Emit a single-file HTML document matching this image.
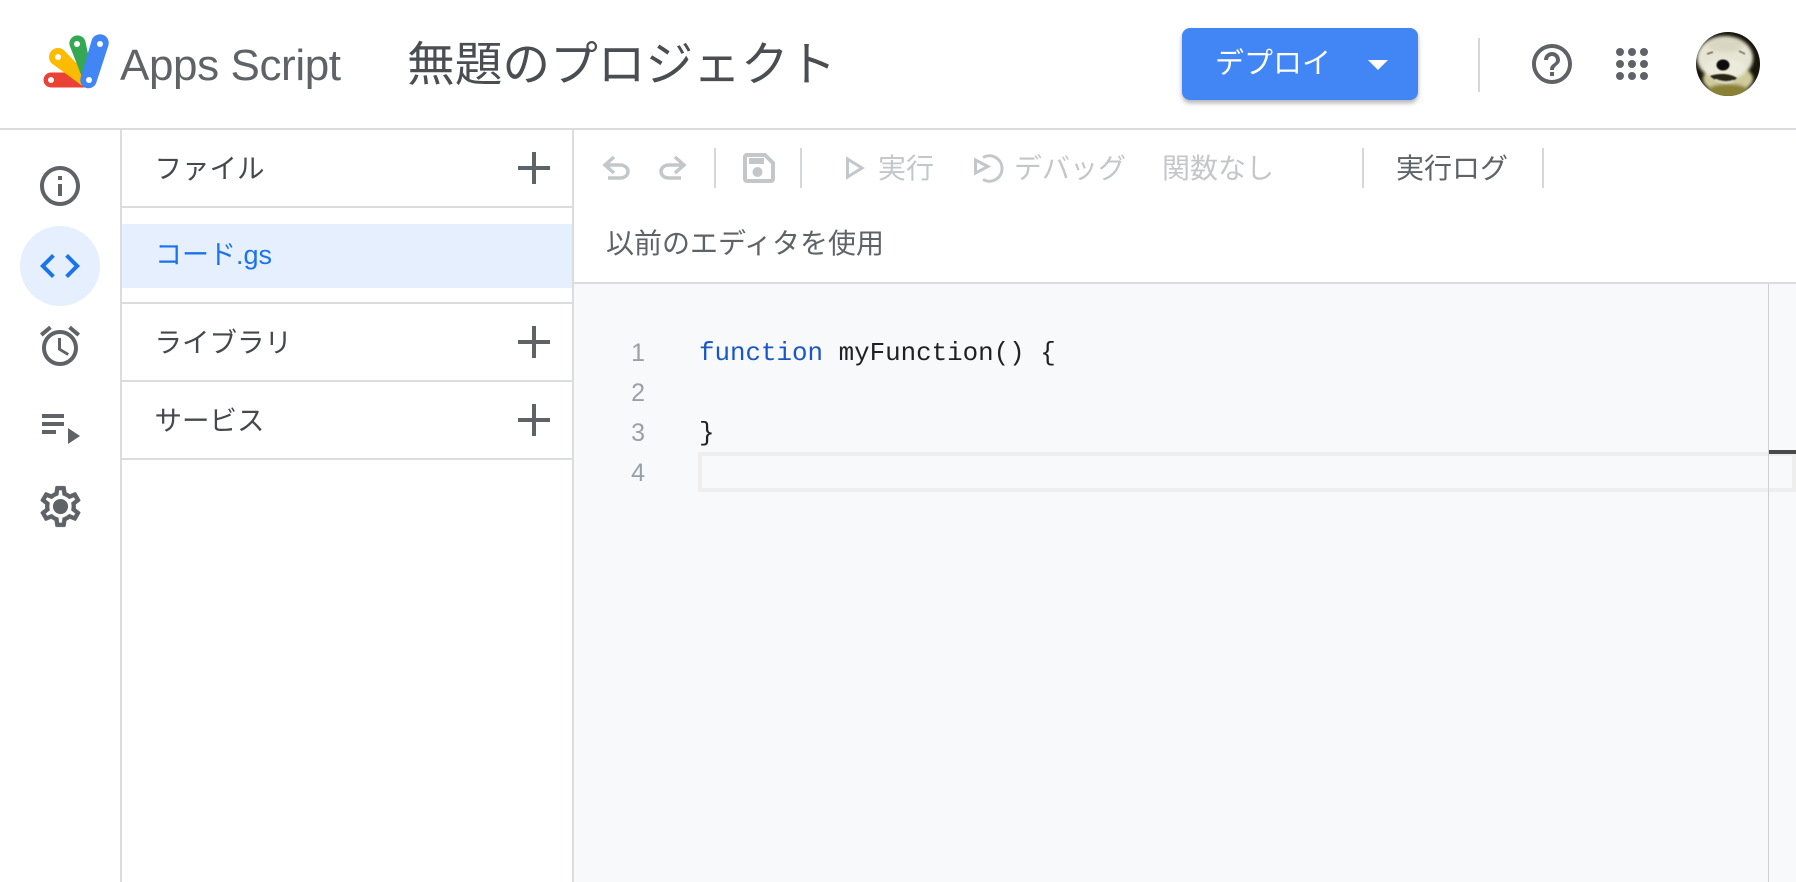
<!DOCTYPE html>
<html lang="ja"><head><meta charset="utf-8"><title>Apps Script</title>
<style>
html,body{margin:0;padding:0;width:1796px;height:882px;overflow:hidden;background:#fff}
body{position:relative;font-family:"Liberation Sans","Noto Sans CJK JP",sans-serif}
.a{position:absolute}
.t{position:absolute;white-space:nowrap;font-family:"Liberation Sans","Noto Sans CJK JP",sans-serif;font-size:28px;line-height:40px;color:#45494d;font-weight:400}
.l{position:absolute;background:#dadce0}
.d{position:absolute;background:#d5d7da;width:2px;top:148px;height:40px}
.g{color:#c4c7ca}
.p{position:absolute;background:#5f6368}
.code{position:absolute;white-space:pre;font-family:"Liberation Mono",monospace;font-size:25.85px;line-height:40px;color:#202124}
.num{position:absolute;left:619px;width:26px;text-align:right;font-family:"Liberation Sans",sans-serif;font-size:25px;line-height:40px;color:#9aa0a6}
svg{position:absolute;overflow:visible}
</style></head><body>

<!-- logo -->
<svg style="left:0;top:0" width="130" height="100" viewBox="0 0 130 100">
<defs><filter id="lb"><feGaussianBlur stdDeviation=".35"/></filter></defs>
<g filter="url(#lb)" stroke-width="1">
<path d="M51 73H72L89 87H51a7 7 0 0 1 0-14z" fill="#ea4335" stroke="#ea4335"/>
<path d="M52 51a8.500 8.500 0 0 1 12 0L89 77 86 87 82 85 52 63a8.500 8.500 0 0 1 0-12z" fill="#fbbc04" stroke="#fbbc04"/>
<path d="M70 45a7.500 7.500 0 0 1 15-3L92 75 89 87 84 81z" fill="#34a853" stroke="#34a853"/>
<path d="M92 41a8 8 0 0 1 16 4L96 82a7.500 7.500 0 0 1-15-4z" fill="#4285f4" stroke="#4285f4"/>
</g>
<circle cx="51" cy="80" r="3" fill="#fff"/><circle cx="58" cy="57" r="3" fill="#fff"/>
<circle cx="77" cy="44" r="3" fill="#fff"/><circle cx="100" cy="44" r="3" fill="#fff"/><circle cx="89" cy="80" r="3" fill="#fff"/>
</svg>
<div class="a" style="left:120px;top:40px;font-size:44px;line-height:52px;color:#5f6368;letter-spacing:-.4px;white-space:nowrap">Apps Script</div>
<div class="t" style="left:407px;top:36px;font-size:47.700px;line-height:60px;color:#4a4e52">無題のプロジェクト</div>

<!-- deploy -->
<div class="a" style="left:1182px;top:28px;width:236px;height:72px;border-radius:8px;background:#4285f4;box-shadow:0 3px 5px rgba(60,64,67,.4)"></div>
<div class="t" style="left:1215px;top:44px;font-size:29px;color:#fff">デプロイ</div>
<svg style="left:1368px;top:60px" width="20" height="10"><path d="M0 0H20L10 10z" fill="#fff"/></svg>
<div class="d" style="left:1478px;top:38px;height:54px"></div>

<svg style="left:1528px;top:40px" width="48" height="48" viewBox="0 0 24 24"><path fill="#5f6368" d="M11 18h2v-2h-2v2zm1-16C6.48 2 2 6.48 2 12s4.48 10 10 10 10-4.48 10-10S17.52 2 12 2zm0 18c-4.41 0-8-3.59-8-8s3.59-8 8-8 8 3.59 8 8-3.590 8-8 8zm0-14c-2.21 0-4 1.79-4 4h2c0-1.1.9-2 2-2s2 .9 2 2c0 2-3 1.75-3 5h2c0-2.25 3-2.5 3-5 0-2.21-1.79-4-4-4z"/></svg>
<svg style="left:1616px;top:48px" width="32" height="32" fill="#5f6368">
<circle cx="4" cy="4" r="4"/><circle cx="16" cy="4" r="4"/><circle cx="28" cy="4" r="4"/>
<circle cx="4" cy="16" r="4"/><circle cx="16" cy="16" r="4"/><circle cx="28" cy="16" r="4"/>
<circle cx="4" cy="28" r="4"/><circle cx="16" cy="28" r="4"/><circle cx="28" cy="28" r="4"/></svg>

<!-- avatar -->
<svg style="left:1696px;top:32px" width="64" height="64" viewBox="0 0 64 64">
<defs><clipPath id="c"><circle cx="32" cy="32" r="32"/></clipPath><filter id="b"><feGaussianBlur stdDeviation="1.500"/></filter><filter id="b2"><feGaussianBlur stdDeviation=".6"/></filter></defs>
<g clip-path="url(#c)"><rect width="64" height="64" fill="#17140a"/>
<g filter="url(#b)">
<ellipse cx="29" cy="26" rx="28" ry="22" fill="#e6e4d2"/>
<ellipse cx="32" cy="47" rx="25" ry="14" fill="#cfcb9c"/>
<ellipse cx="32" cy="59" rx="21" ry="7" fill="#8a8136"/>
<ellipse cx="29" cy="37" rx="21" ry="10" fill="#eceadb"/>
<ellipse cx="30" cy="13" rx="18" ry="7" fill="#d9d7c2"/>
</g>
<g filter="url(#b2)">
<ellipse cx="27" cy="33" rx="6.500" ry="5.500" fill="#111"/>
<path d="M14 44C22 41 34 41 41 46 35 52 22 52 14 44z" fill="#2b2514"/>
<path d="M19 48C26 51 33 51 38 49" stroke="#d8d6c0" stroke-width="2.500" fill="none"/>
<path d="M11 22l6-2M43 19l6 3" stroke="#6b6753" stroke-width="1.500"/>
</g></g></svg>

<div class="l" style="left:0;top:128px;width:1796px;height:2px"></div>

<!-- left rail -->
<div class="l" style="left:120px;top:130px;width:2px;height:752px"></div>
<svg style="left:36px;top:162px" width="48" height="48" viewBox="0 0 24 24"><path fill="#5f6368" d="M11 7h2v2h-2zm0 4h2v6h-2zm1-9C6.48 2 2 6.48 2 12s4.48 10 10 10 10-4.48 10-10S17.520 2 12 2zm0 18c-4.41 0-8-3.59-8-8s3.59-8 8-8 8 3.59 8 8-3.59 8-8 8z"/></svg>
<div class="a" style="left:20px;top:226px;width:80px;height:80px;border-radius:50%;background:#e5effd"></div>
<svg style="left:36px;top:242px" width="48" height="48" viewBox="0 0 24 24"><path fill="#1a73e8" d="M9.4 16.6L4.8 12l4.6-4.6L8 6l-6 6 6 6 1.4-1.4zm5.2 0l4.6-4.6-4.6-4.6L16 6l6 6-6 6-1.4-1.4z"/></svg>
<svg style="left:36px;top:322.300px" width="48" height="48" viewBox="0 0 24 24"><path fill="#5f6368" d="M22 5.72l-4.6-3.86-1.29 1.53 4.6 3.86L22 5.72zM7.88 3.39L6.6 1.86 2 5.71l1.29 1.53 4.59-3.85zM12.5 8H11v6l4.75 2.85.75-1.23-4-2.37V8zM12 4c-4.97 0-9 4.03-9 9s4.02 9 9 9c4.97 0 9-4.03 9-9s-4.03-9-9-9zm0 16c-3.87 0-7-3.13-7-7s3.13-7 7-7 7 3.13 7 7-3.13 7-7 7z"/></svg>
<svg style="left:0;top:400px" width="100" height="50" fill="#5f6368">
<rect x="42" y="14" width="22" height="4"/><rect x="42" y="22" width="22" height="4"/><rect x="42" y="30" width="14" height="4"/>
<path d="M68 28L80 36 68 44z"/></svg>
<svg style="left:35.500px;top:481.500px" width="49" height="49" viewBox="0 0 24 24"><path fill="#5f6368" stroke="#5f6368" stroke-width=".15" stroke-linejoin="round" d="M19.43 12.98c.04-.32.07-.64.07-.98 0-.34-.03-.66-.07-.98l2.11-1.65c.19-.15.24-.42.12-.64l-2-3.46c-.09-.16-.26-.25-.44-.25-.06 0-.12.01-.17.03l-2.49 1c-.52-.4-1.08-.73-1.69-.98l-.38-2.65C14.46 2.18 14.25 2 14 2h-4c-.25 0-.46.18-.49.42l-.38 2.65c-.61.25-1.17.59-1.69.98l-2.49-1c-.06-.02-.12-.03-.18-.03-.17 0-.34.09-.43.25l-2 3.46c-.13.22-.07.49.12.64l2.11 1.65c-.04.32-.07.65-.07.98 0 .33.03.66.07.98l-2.11 1.65c-.19.15-.24.42-.12.64l2 3.46c.09.16.26.25.44.25.06 0 .12-.01.17-.03l2.49-1c.52.4 1.08.73 1.69.98l.38 2.65c.03.24.24.42.49.42h4c.25 0 .46-.18.49-.42l.38-2.65c.61-.25 1.17-.59 1.69-.98l2.49 1c.06.02.12.03.18.03.17 0 .34-.09.43-.25l2-3.46c.12-.22.07-.49-.12-.64l-2.11-1.65zm-1.98-1.71c.04.31.05.52.05.73 0 .21-.02.43-.05.73l-.14 1.13.89.7 1.08.84-.7 1.21-1.27-.51-1.04-.42-.9.68c-.43.32-.84.56-1.25.73l-1.06.43-.16 1.13-.2 1.35h-1.4l-.19-1.35-.16-1.13-1.06-.43c-.43-.18-.83-.41-1.23-.71l-.91-.7-1.06.43-1.27.51-.7-1.21 1.08-.84.89-.7-.14-1.13c-.03-.31-.05-.54-.05-.74s.02-.43.05-.73l.14-1.13-.89-.7-1.08-.84.7-1.21 1.27.51 1.04.42.9-.68c.43-.32.84-.56 1.25-.73l1.06-.43.16-1.13.2-1.35h1.39l.19 1.35.16 1.13 1.06.43c.43.18.83.41 1.23.71l.91.7 1.06-.43 1.27-.51.7 1.21-1.07.85-.89.7.14 1.13z"/><circle cx="12" cy="12" r="3.700" fill="#5f6368"/></svg>

<!-- sidebar -->
<div class="l" style="left:572px;top:130px;width:2px;height:752px"></div>
<div class="t" style="left:154.500px;top:149px;font-size:27.500px">ファイル</div>
<div class="p" style="left:518px;top:166.250px;width:32px;height:3.500px"></div><div class="p" style="left:532.250px;top:152px;width:3.500px;height:32px"></div>
<div class="l" style="left:122px;top:206px;width:450px;height:2px"></div>
<div class="a" style="left:122px;top:224px;width:450px;height:64px;background:#e5effd"></div>
<div class="t" style="left:155px;top:235px;font-size:27px;color:#1a73e8">コード.gs</div>
<div class="l" style="left:122px;top:302px;width:450px;height:2px"></div>
<div class="t" style="left:154.500px;top:323px;font-size:27.500px">ライブラリ</div>
<div class="p" style="left:518px;top:340.250px;width:32px;height:3.500px"></div><div class="p" style="left:532.250px;top:326px;width:3.500px;height:32px"></div>
<div class="l" style="left:122px;top:380px;width:450px;height:2px"></div>
<div class="t" style="left:154.500px;top:401px;font-size:27.500px">サービス</div>
<div class="p" style="left:518px;top:418.250px;width:32px;height:3.500px"></div><div class="p" style="left:532.250px;top:404px;width:3.500px;height:32px"></div>
<div class="l" style="left:122px;top:458px;width:450px;height:2px"></div>

<!-- toolbar -->
<svg style="left:0;top:0" width="1100" height="200" fill="none" stroke="#c4c7ca" stroke-width="3.500">
<path d="M614 157L605 165 614 173M605 165H620C625 165 628 168 628 171.500S625 178 620 178H608"/>
<path d="M675 157L684 165 675 173M684 165H669C664 165 661 168 661 171.500S664 178 669 178H681"/>
<path d="M745 157a2 2 0 0 1 2-2H765L773 163V179a2 2 0 0 1-2 2H747a2 2 0 0 1-2-2z" stroke-width="4"/>
<rect x="749" y="158" width="15" height="6" fill="#c4c7ca" stroke="none"/><circle cx="757.500" cy="172" r="5" fill="#c4c7ca" stroke="none"/>
<path d="M847.500 159L862 168 847.500 177z" stroke-width="3"/>
<path d="M975.500 160L988 166.500 975.500 173z" stroke-width="3"/>
<path d="M983 157.500A12.700 12.700 0 1 1 983 179.500" stroke-width="3"/>
</svg>
<div class="d" style="left:714px"></div>
<div class="d" style="left:800px"></div>
<div class="t g" style="left:878px;top:149px">実行</div>
<div class="t g" style="left:1014px;top:149px">デバッグ</div>
<div class="t g" style="left:1162px;top:149px">関数なし</div>
<div class="d" style="left:1362px"></div>
<div class="t" style="left:1396px;top:149px;color:#5f6368">実行ログ</div>
<div class="d" style="left:1542px"></div>
<div class="t" style="left:606px;top:224px;color:#5f6368">以前のエディタを使用</div>
<div class="l" style="left:574px;top:282px;width:1222px;height:2px"></div>

<!-- editor -->
<div class="a" style="left:574px;top:284px;width:1222px;height:598px;background:#f8f9fa"></div>
<div class="a" style="left:698px;top:452px;width:1098px;height:40px;box-sizing:border-box;border:4px solid #eeeeee"></div>
<div class="num" style="top:333px">1</div><div class="num" style="top:373px">2</div><div class="num" style="top:413px">3</div><div class="num" style="top:453px">4</div>
<div class="code" style="left:699px;top:333px"><span style="color:#1a56c4">function</span> myFunction() {</div>
<div class="code" style="left:699px;top:413px">}</div>
<div class="a" style="left:1768px;top:284px;width:1px;height:598px;background:#cfd0d2"></div>
<div class="a" style="left:1769px;top:450px;width:27px;height:4px;background:#4a4a4a"></div>
</body></html>
